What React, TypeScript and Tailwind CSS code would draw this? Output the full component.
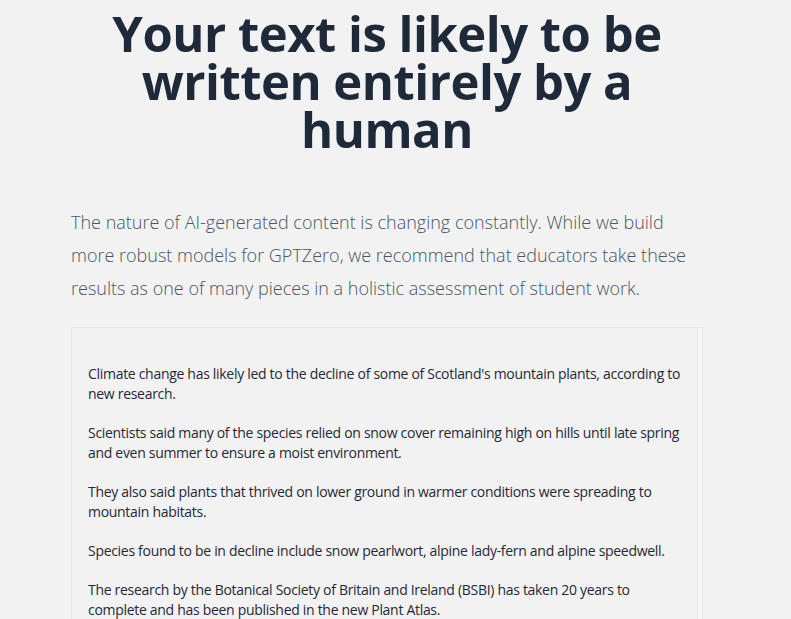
import React from 'react';

const PARAGRAPHS = [
  "Climate change has likely led to the decline of some of Scotland's mountain plants, according to new research.",
  'Scientists said many of the species relied on snow cover remaining high on hills until late spring and even summer to ensure a moist environment.',
  'They also said plants that thrived on lower ground in warmer conditions were spreading to mountain habitats.',
  'Species found to be in decline include snow pearlwort, alpine lady-fern and alpine speedwell.',
  'The research by the Botanical Society of Britain and Ireland (BSBI) has taken 20 years to complete and has been published in the new Plant Atlas.',
];

const App: React.FC = () => {
  return (
    <div className="min-h-screen bg-[#f2f2f2] font-['Open_Sans',sans-serif]">
      <div className="pl-[71px] w-[703px]">
        <h1 className="pt-[9px] text-center text-[49px] leading-[48px] font-bold text-[#1e2939] tracking-[-0.5px]">
          Your text is likely to be written entirely by a human
        </h1>

        <p className="mt-[53px] text-[18px] leading-[33px] text-[#4b5563] font-light">
          The nature of AI-generated content is changing constantly. While we build more robust models for GPTZero, we
          recommend that educators take these results as one of many pieces in a holistic assessment of student work.
        </p>

        <div className="mt-[22px] flex border border-[#e6e6e6] border-b-0">
          <div className="flex-1 pl-[16px] pr-[8px] pt-[36px] pb-6">
            {PARAGRAPHS.map((p) => (
              <p key={p} className="mb-[19px] text-[14px] leading-[20px] tracking-[-0.3px] text-[#1f2937]">
                {p}
              </p>
            ))}
          </div>
          <div className="w-[5px] border-l border-[#e6e6e6] bg-[#f5f5f5]" />
        </div>
      </div>
    </div>
  );
};

export default App;
